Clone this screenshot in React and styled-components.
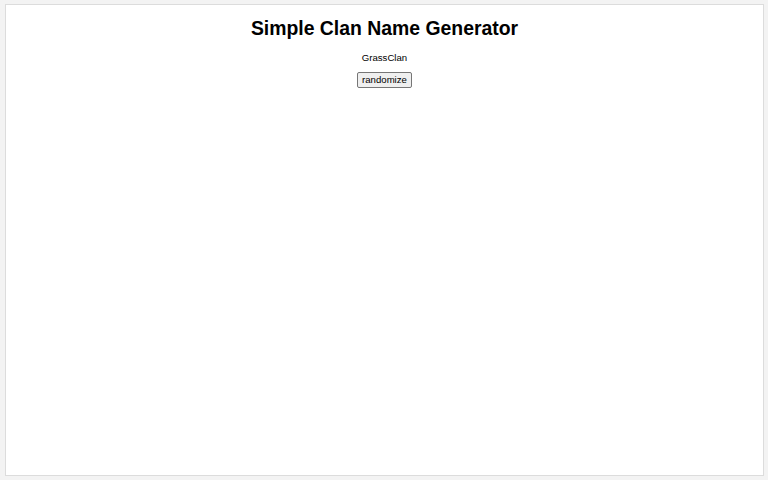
import React, { useState } from "react";
import styled, { createGlobalStyle } from "styled-components";

const names = ["Grass", "Thunder", "River", "Shadow", "Wind", "Sky", "Blood", "Star"];

const GlobalStyle = createGlobalStyle`
  html, body {
    margin: 0;
    height: 100%;
    background: #f3f3f3;
    font-family: "Liberation Sans", Arial, sans-serif;
  }
  #root {
    height: 100%;
  }
`;

const Page = styled.div`
  box-sizing: border-box;
  height: 100%;
  padding: 4px 4px 4px 5px;
  display: flex;
`;

const Card = styled.main`
  flex: 1;
  background: #fff;
  border: 1px solid #dcdcdc;
  display: flex;
  flex-direction: column;
  align-items: center;
`;

const Title = styled.h1`
  margin: 12px 0 0;
  font-size: 19.4px;
  font-weight: bold;
  color: #000;
`;

const ClanName = styled.p`
  margin: 12px 0 0;
  font-size: 9.6px;
  color: #000;
`;

const RandomButton = styled.button`
  box-sizing: border-box;
  height: 16px;
  margin-top: 9px;
  font-family: "Liberation Sans", Arial, sans-serif;
  font-size: 9.6px;
  line-height: 1;
  padding: 0 4px;
  color: #000;
  background: #efefef;
  border: 1px solid #767676;
  border-radius: 2px;
`;

function App() {
  const [name, setName] = useState("Grass");

  return (
    <>
      <GlobalStyle />
      <Page>
        <Card>
          <Title>Simple Clan Name Generator</Title>
          <ClanName>{name}Clan</ClanName>
          <RandomButton onClick={() => setName(names[Math.floor(Math.random() * names.length)])}>
            randomize
          </RandomButton>
        </Card>
      </Page>
    </>
  );
}

export default App;
